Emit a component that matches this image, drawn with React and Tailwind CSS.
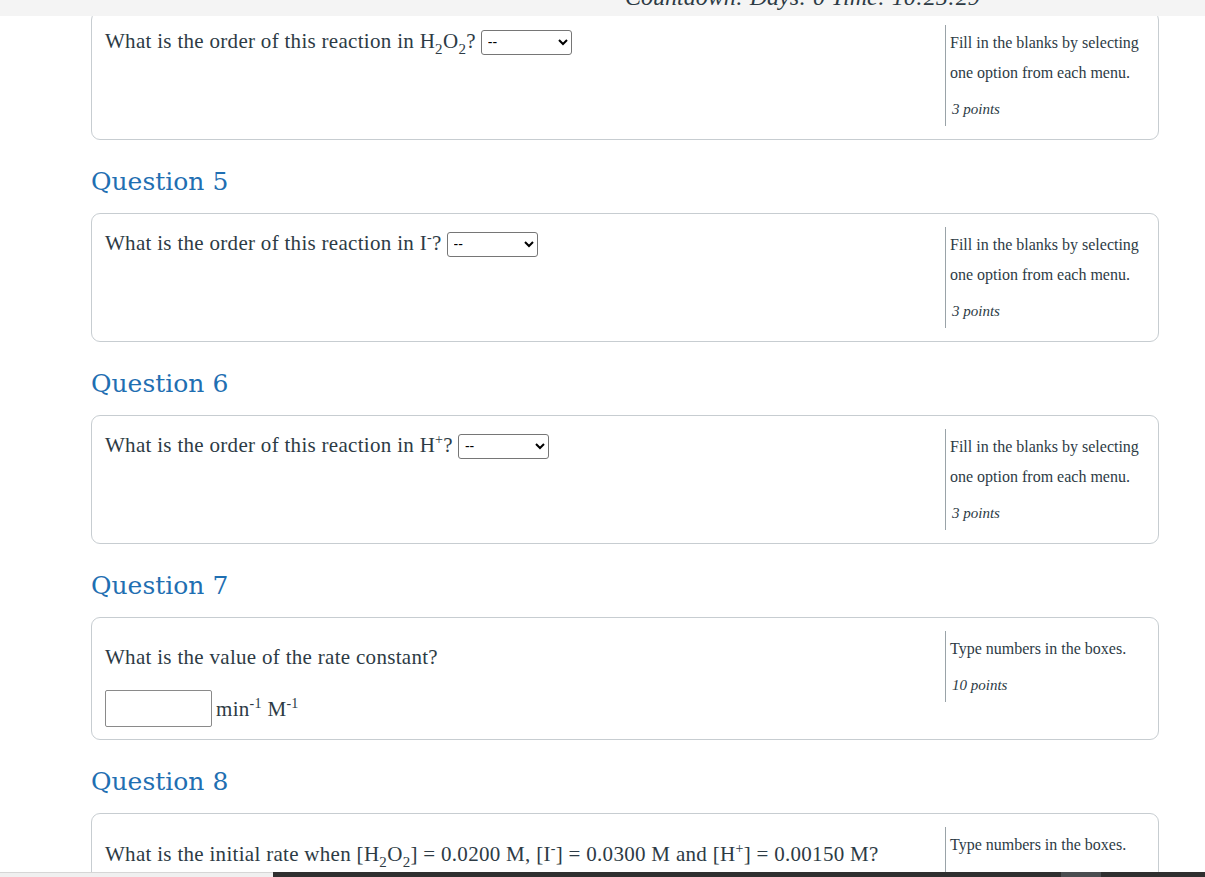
import React from 'react';

const textCls = "text-[21px] tracking-[0.3px] text-[#2d3b45]";

function Sub({ children }) {
  return <span className="relative top-[6px] text-[15px] leading-none">{children}</span>;
}

function Sup({ children }) {
  return <span className="relative -top-[8px] text-[14px] leading-none">{children}</span>;
}

function OrderSelect() {
  return (
    <select
      defaultValue="--"
      className="ml-[5px] w-[91px] h-[25px] border border-[#767676] rounded-[3px] bg-white pl-[2px] text-[14px] text-black font-['Liberation_Sans',sans-serif] tracking-normal align-[1px]"
    >
      <option>--</option>
      <option>0</option>
      <option>1</option>
      <option>2</option>
    </select>
  );
}

function SidePanel({ lines, points }) {
  return (
    <div className="w-[213px] shrink-0 self-start mt-[13px] mb-[13px] border-l border-[#9aa3a8] pl-[4px] pt-[3px] pb-[5px] text-[16px] text-[#2d3b45]">
      {lines.map((l) => (
        <div key={l} className="leading-[30px]">{l}</div>
      ))}
      <div className="mt-[9px] pl-[2px] leading-[24px] text-[15px] italic">{points}</div>
    </div>
  );
}

function Card({ children, side }) {
  return (
    <div className="flex border border-[#c7cdd1] rounded-[9px] bg-white">
      <div className="flex-1 px-[13px]">{children}</div>
      {side}
    </div>
  );
}

function Heading({ n }) {
  return (
    <h2 className="mt-[27px] mb-[16px] leading-[30px] text-[25px] text-[#1f6fb2] font-['DejaVu_Serif',serif]">
      Question {n}
    </h2>
  );
}

const fillSide = (
  <SidePanel lines={['Fill in the blanks by selecting', 'one option from each menu.']} points="3 points" />
);

export default function App() {
  return (
    <div className="min-h-screen bg-white font-['Liberation_Serif',serif]">
      {/* countdown bar, fixed over the page */}
      <div className="fixed top-0 left-0 right-0 z-10 h-[16px] overflow-hidden bg-[#f4f4f4]">
        <div className="ml-[625px] -mt-[17px] leading-[28px] text-[24px] italic text-[#2d3b45] whitespace-nowrap">
          Countdown: Days: 0 Time: 10:25:29
        </div>
      </div>

      <div className="ml-[91px] w-[1068px] pt-[11px] pb-[60px]">
        <Card side={fillSide}>
          <div className={`pt-[15px] leading-[28px] ${textCls}`}>
            What is the order of this reaction in H<Sub>2</Sub>O<Sub>2</Sub>?<OrderSelect />
          </div>
        </Card>

        <Heading n={5} />
        <Card side={fillSide}>
          <div className={`pt-[15px] leading-[28px] ${textCls}`}>
            What is the order of this reaction in I<Sup>-</Sup>?<OrderSelect />
          </div>
        </Card>

        <Heading n={6} />
        <Card side={fillSide}>
          <div className={`pt-[15px] leading-[28px] ${textCls}`}>
            What is the order of this reaction in H<Sup>+</Sup>?<OrderSelect />
          </div>
        </Card>

        <Heading n={7} />
        <Card side={<SidePanel lines={['Type numbers in the boxes.']} points="10 points" />}>
          <div className={`pt-[25px] leading-[28px] ${textCls}`}>What is the value of the rate constant?</div>
          <div className={`mt-[19px] pb-[12px] flex items-center ${textCls}`}>
            <input className="w-[107px] h-[37px] border border-[#8a8a8a] rounded-[2px] bg-white" />
            <span className="ml-[4px] leading-[28px]">
              min<Sup>-1</Sup> M<Sup>-1</Sup>
            </span>
          </div>
        </Card>

        <Heading n={8} />
        <Card side={<SidePanel lines={['Type numbers in the boxes.']} points="10 points" />}>
          <div className={`pt-[26px] leading-[28px] ${textCls}`}>
            What is the initial rate when [H<Sub>2</Sub>O<Sub>2</Sub>] = 0.0200 M, [I<Sup>-</Sup>] = 0.0300 M and [H<Sup>+</Sup>] = 0.00150 M?
          </div>
          <div className="mt-[19px] pb-[12px] flex items-center gap-2">
            <input className="w-[107px] h-[37px] border border-[#8a8a8a] rounded-[2px] bg-white" />
            <span className={textCls}>M/min</span>
          </div>
        </Card>
      </div>

      {/* taskbar strip at the bottom edge */}
      <div className="fixed bottom-0 left-0 right-0 z-10 h-[5px] flex">
        <div className="w-[273px] bg-[#f0f0f0] border-t border-[#d6d6d6]" />
        <div className="flex-1 flex bg-[#2f2f2f]">
          <div className="w-[788px]" />
          <div className="w-[40px] bg-[#4a4d50]" />
        </div>
      </div>
    </div>
  );
}
